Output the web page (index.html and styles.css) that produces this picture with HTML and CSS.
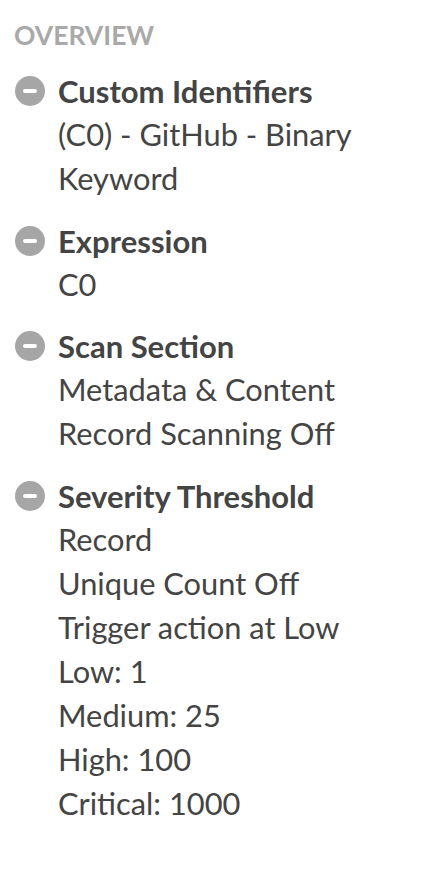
FILE: index.html
```html
<!DOCTYPE html>
<html>
<head>
<meta charset="utf-8">
<link rel="stylesheet" href="styles.css">
</head>
<body>
<div class="panel">
  <div class="title">OVERVIEW</div>
  <div class="groups">
    <div class="group">
      <div class="head"><span class="icon"></span><span class="label">Custom Identifiers</span></div>
      <div class="line">(C0) - GitHub - Binary</div>
      <div class="line">Keyword</div>
    </div>
    <div class="group">
      <div class="head"><span class="icon"></span><span class="label">Expression</span></div>
      <div class="line">C0</div>
    </div>
    <div class="group">
      <div class="head"><span class="icon"></span><span class="label">Scan Section</span></div>
      <div class="line">Metadata &amp; Content</div>
      <div class="line">Record Scanning Off</div>
    </div>
    <div class="group">
      <div class="head"><span class="icon"></span><span class="label">Severity Threshold</span></div>
      <div class="line">Record</div>
      <div class="line">Unique Count Off</div>
      <div class="line">Trigger action at Low</div>
      <div class="line">Low: 1</div>
      <div class="line">Medium: 25</div>
      <div class="line">High: 100</div>
      <div class="line">Critical: 1000</div>
    </div>
  </div>
</div>
</body>
</html>
```
FILE: styles.css
```css
html, body {
  margin: 0;
  padding: 0;
  background: #ffffff;
}
.panel {
  font-family: Lato, "Noto Sans", sans-serif;
  color: #444444;
  padding: 20px 0 0 14px;
}
.title {
  font-size: 26.5px;
  font-weight: 700;
  color: #a9a9a9;
  line-height: 30px;
}
.groups {
  display: flex;
  flex-direction: column;
  gap: 17.5px;
  margin-top: 19px;
}
.head {
  display: flex;
  align-items: center;
  gap: 13px;
  height: 44px;
  padding-left: 1px;
}
.icon {
  position: relative;
  width: 30px;
  height: 30px;
  border-radius: 50%;
  background: #a6a6a6;
  flex: none;
}
.icon::after {
  content: "";
  position: absolute;
  left: 8px;
  top: 13px;
  width: 14px;
  height: 4px;
  border-radius: 2px;
  background: #ffffff;
}
.label {
  font-size: 31px;
  font-weight: 700;
  color: #444444;
}
.line {
  font-size: 30.8px;
  line-height: 44px;
  padding-left: 44px;
  color: #444444;
}
```
